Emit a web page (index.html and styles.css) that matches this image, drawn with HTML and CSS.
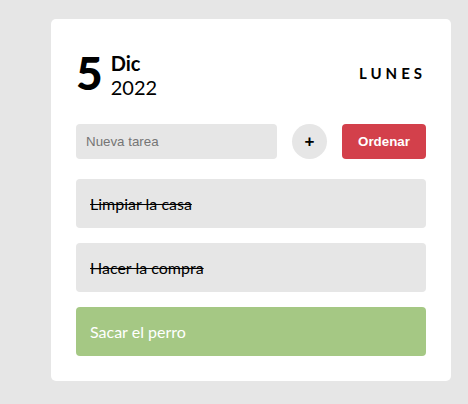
FILE: index.html
```html
<!DOCTYPE html>
<html lang="es">
<head>
<meta charset="utf-8">
<title>Tareas</title>
<link rel="stylesheet" href="styles.css">
</head>
<body>
<div class="card">
  <header class="header">
    <div class="date">
      <span class="day">5</span>
      <div class="month-year">
        <span class="month">Dic</span>
        <span class="year">2022</span>
      </div>
    </div>
    <div class="weekday">LUNES</div>
  </header>
  <form class="new-task">
    <input class="task-input" type="text" placeholder="Nueva tarea">
    <button type="button" class="add-btn">+</button>
    <button type="button" class="sort-btn">Ordenar</button>
  </form>
  <ul class="tasks">
    <li class="task done">Limpiar la casa</li>
    <li class="task done">Hacer la compra</li>
    <li class="task active">Sacar el perro</li>
  </ul>
</div>
</body>
</html>
```
FILE: styles.css
```css
html, body {
  margin: 0;
  padding: 0;
  background: #e6e6e6;
}

body {
  font-family: "Lato", "Liberation Sans", sans-serif;
  color: #000;
  padding: 19px 0 0 51px;
}

.card {
  box-sizing: border-box;
  width: 400px;
  height: 362px;
  background: #fff;
  border-radius: 5px;
  padding: 25px;
}

.header {
  display: flex;
  justify-content: space-between;
  align-items: center;
  height: 55px;
}

.date {
  display: flex;
  align-items: center;
  gap: 8px;
}

.day {
  font-size: 46px;
  font-weight: 900;
  line-height: 1.2;
  margin-top: 3px;
}

.month-year {
  display: flex;
  flex-direction: column;
  font-size: 20px;
  line-height: 24px;
  margin-top: 6px;
}

.month {
  font-weight: 700;
}

.year {
  font-weight: 400;
}

.weekday {
  font-size: 15px;
  font-weight: 700;
  letter-spacing: 4px;
  margin-right: 0;
  margin-top: 2px;
}

.new-task {
  display: flex;
  gap: 15px;
  margin: 25px 0 0;
}

.task-input {
  flex: 1;
  height: 35px;
  box-sizing: border-box;
  border: none;
  border-radius: 4px;
  background: #e6e6e6;
  padding: 0 10px;
  font-family: "Liberation Sans", Arial, sans-serif;
  font-size: 13.333px;
  outline: none;
}

.task-input::placeholder {
  color: #757575;
}

.add-btn {
  width: 35px;
  height: 35px;
  border: none;
  border-radius: 50%;
  background: #e6e6e6;
  font-family: "Liberation Sans", Arial, sans-serif;
  font-size: 17px;
  font-weight: 700;
  color: #000;
  padding: 0;
}

.sort-btn {
  width: 84px;
  height: 35px;
  border: none;
  border-radius: 4px;
  background: #d3404b;
  color: #fff;
  font-family: "Liberation Sans", Arial, sans-serif;
  font-size: 13.333px;
  font-weight: 700;
  padding: 0;
}

.tasks {
  list-style: none;
  margin: 20px 0 0;
  padding: 0;
  display: flex;
  flex-direction: column;
  gap: 15px;
}

.task {
  height: 49px;
  box-sizing: border-box;
  display: flex;
  align-items: center;
  padding: 0 14px;
  border-radius: 4px;
  font-size: 16px;
}

.task.done {
  background: #e6e6e6;
  text-decoration: line-through;
  color: #000;
}

.task.active {
  background: #a5c884;
  color: #fff;
}
```
